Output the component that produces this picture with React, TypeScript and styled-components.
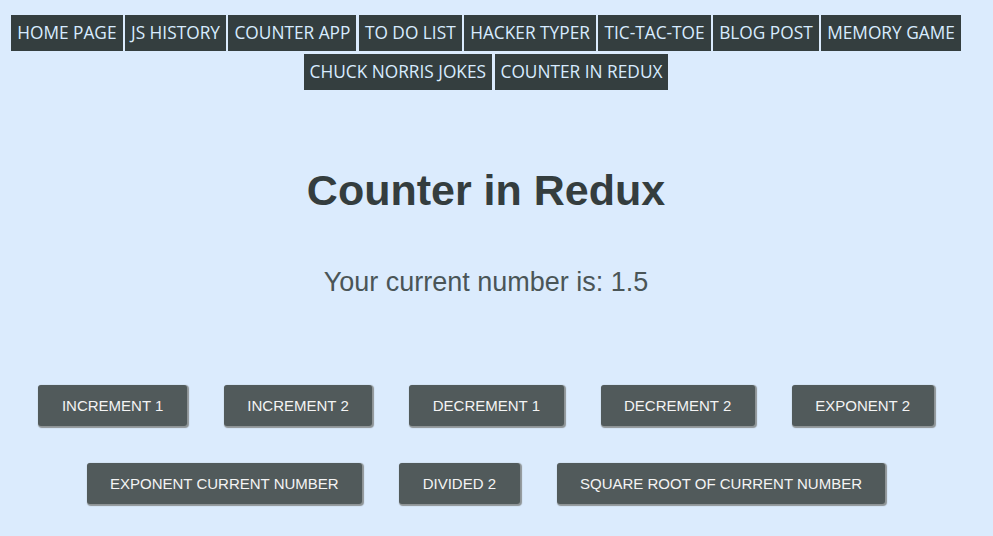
import styled, { createGlobalStyle } from "styled-components";

const GlobalStyle = createGlobalStyle`
  html, body {
    margin: 0;
    padding: 0;
    background-color: #dbebfd;
  }
  body {
    font-family: "Liberation Sans", Arial, sans-serif;
  }
`;

const Page = styled.div`
  width: 972px;
  min-height: 536px;
`;

const Nav = styled.nav`
  display: flex;
  flex-wrap: wrap;
  justify-content: center;
  gap: 3px 2.5px;
  padding-top: 15px;
`;

const NavLink = styled.a`
  display: block;
  height: 36px;
  line-height: 36px;
  padding: 0 6px;
  background-color: #343e3f;
  color: #d8ecff;
  font-family: "Open Sans", "Noto Sans", sans-serif;
  font-size: 17.3px;
  text-decoration: none;
  white-space: nowrap;
`;

const Main = styled.main`
  display: flex;
  flex-direction: column;
  align-items: center;
`;

const Title = styled.h1`
  margin: 76px 0 0;
  font-size: 43px;
  line-height: 48px;
  font-weight: 700;
  color: #343d3e;
`;

const Current = styled.p`
  margin: 53px 0 0;
  font-size: 27px;
  line-height: 31px;
  color: #4a5557;
`;

const Buttons = styled.div`
  display: flex;
  flex-wrap: wrap;
  justify-content: center;
  gap: 37px;
  margin-top: 87px;
  width: 100%;
`;

const ActionButton = styled.button`
  height: 41px;
  padding: 0 23.5px;
  background-color: #515a5b;
  color: #f4f4f4;
  border: none;
  border-radius: 3px;
  box-shadow: 1px 1px 1px 1px #8e9496;
  font-family: "Liberation Sans", Arial, sans-serif;
  font-size: 15px;
  text-transform: uppercase;
  cursor: pointer;
`;

const links = [
  "HOME PAGE",
  "JS HISTORY",
  "COUNTER APP",
  "TO DO LIST",
  "HACKER TYPER",
  "TIC-TAC-TOE",
  "BLOG POST",
  "MEMORY GAME",
  "CHUCK NORRIS JOKES",
  "COUNTER IN REDUX",
];

const actions = [
  "Increment 1",
  "Increment 2",
  "Decrement 1",
  "Decrement 2",
  "Exponent 2",
  "Exponent current number",
  "Divided 2",
  "Square root of current number",
];

const App = () => {
  return (
    <Page>
      <GlobalStyle />
      <Nav>
        {links.map((l) => (
          <NavLink key={l} href="#">
            {l}
          </NavLink>
        ))}
      </Nav>
      <Main>
        <Title>Counter in Redux</Title>
        <Current>Your current number is: 1.5</Current>
        <Buttons>
          {actions.map((a) => (
            <ActionButton key={a}>{a}</ActionButton>
          ))}
        </Buttons>
      </Main>
    </Page>
  );
};

export default App;
